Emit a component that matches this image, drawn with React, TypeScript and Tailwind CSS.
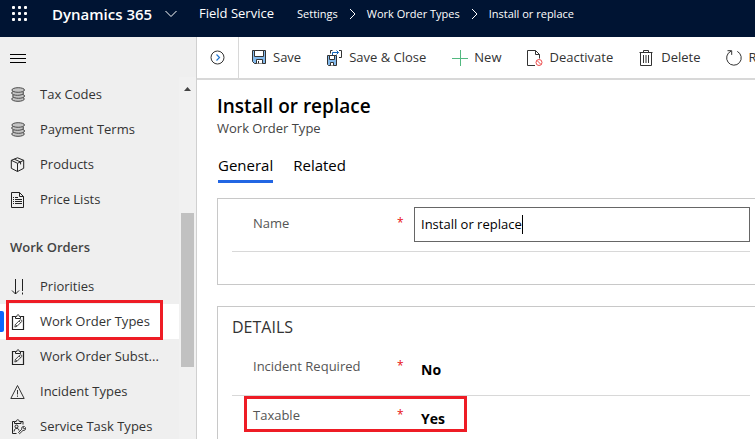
import { useState, type ReactNode } from "react";

const navItems = [
  { label: "Tax Codes", icon: <CoinsIcon /> },
  { label: "Payment Terms", icon: <CoinsIcon /> },
  { label: "Products", icon: <BoxIcon /> },
  { label: "Price Lists", icon: <ListIcon /> },
];

const workOrderItems = [
  { label: "Priorities", icon: <PriorityIcon /> },
  { label: "Work Order Types", icon: <ClipboardIcon />, active: true },
  { label: "Work Order Subst...", icon: <ClipboardIcon /> },
  { label: "Incident Types", icon: <WarningIcon /> },
  { label: "Service Task Types", icon: <TaskIcon /> },
];

function CoinsIcon() {
  return (
    <svg width="16" height="16" viewBox="0 0 16 16" fill="#c4c4c4" stroke="#4a4a4a">
      <ellipse cx="8" cy="12" rx="6.3" ry="2.3" />
      <ellipse cx="8.6" cy="9" rx="6" ry="2.3" />
      <ellipse cx="7.6" cy="6" rx="6" ry="2.3" />
      <ellipse cx="8.2" cy="3" rx="6.3" ry="2.3" />
    </svg>
  );
}

function BoxIcon() {
  return (
    <svg width="16" height="16" viewBox="0 0 16 16" fill="none" stroke="#222" strokeLinejoin="round">
      <path d="M7.5.8 13.700 3.300v8L7.500 14.500 1.300 11.300v-8zM1.300 3.300l6.200 3 6.200-3M7.500 6.300v8.200M4.300 2.200l6.300 2.800v2.400" />
    </svg>
  );
}

function ListIcon() {
  return (
    <svg width="16" height="16" viewBox="0 0 16 16" fill="none" stroke="#222">
      <path d="M1.500.5h8l4 4v11h-12zM9.500.5v4h4" />
      <path d="M3 5.500h1m1 0h3M3 7.500h1m1 0h7M3 9.500h1m1 0h7M3 11.500h1m1 0h7" />
    </svg>
  );
}

function PriorityIcon() {
  return (
    <svg width="16" height="16" viewBox="0 0 16 16" fill="none" stroke="#222">
      <path d="M5.500 0v15M2 11.500 5.500 15 9 11.500M12.500 0v12M12.500 13.500v2" />
    </svg>
  );
}

function ClipboardIcon() {
  return (
    <svg width="16" height="16" viewBox="0 0 16 16" fill="none" stroke="#222">
      <path d="M5.500 2.500h-3v13h11v-13h-3" strokeWidth="1.200" />
      <path d="M5.500 4.500v-2h1.300C6.800.2 9.300.2 9.300 2.500h1.200v2z" />
      <path d="m4.800 13 .6-2.500 4.500-4.500c1-.8 2.600.6 1.700 1.700l-4.500 4.500zM9 7l1.700 1.700M5.400 10.500l1.700 1.700" strokeWidth=".8" />
    </svg>
  );
}

function WarningIcon() {
  return (
    <svg width="16" height="16" viewBox="0 0 16 16" fill="none" stroke="#333">
      <path d="M7.500 1.500.8 14.500h13.400zM7.500 6v4.500M7.500 11.500v1.300" />
    </svg>
  );
}

function TaskIcon() {
  return (
    <svg width="16" height="16" viewBox="0 0 16 16" fill="none" stroke="#222">
      <path d="M4.500 2.500h-2v12h4M11 2.500h2v3M4.500 4.500v-2h1.700C6.200.2 9.300.2 9.300 2.500H11v2z" />
      <circle cx="6.500" cy="7.500" r="1.500" />
      <path d="M4 12.500c.2-4 4.800-4 5-1" />
      <path d="m8.500 13.500 3.300-3.300c-.5-2 .8-3.200 2.600-2.700l-1.300 1.300 1.100 1.100 1.300-1.300c.6 2-.8 3.200-2.500 2.800l-3.300 3.200z" strokeWidth=".9" />
    </svg>
  );
}

function SaveIcon() {
  return (
    <svg width="16" height="16" viewBox="0 0 16 16" fill="none" stroke="#333">
      <path d="M1.500.5h13v13h-11l-2-2z" fill="#83b9eb" />
      <path d="M3.500.5h9v6h-9zM5.500 13.500v-4h6v4" fill="#fff" />
      <path d="M7.500 11v2.500" />
    </svg>
  );
}

function SaveCloseIcon() {
  return (
    <svg width="16" height="16" viewBox="0 0 16 16" fill="none" stroke="#333">
      <path d="M.5 5.500h9v10h-8l-1-1z" fill="#83b9eb" />
      <path d="M2.500 5.500h5v4h-5zM3.500 15.500v-3h3v3" fill="#fff" />
      <path d="M3.500 3.500v-3h2M12 .5h2.500v7H12" />
      <path d="M5.500 5V2.500h6M9.500.5l2 2-2 2" stroke="#1565b8" />
    </svg>
  );
}

function NewIcon() {
  return (
    <svg width="16" height="16" viewBox="0 0 16 16" stroke="#52b980">
      <path d="M0 8.500h16M8.500 0v16" />
    </svg>
  );
}

function DeactivateIcon() {
  return (
    <svg width="16" height="16" viewBox="0 0 16 16" fill="none" stroke="#333">
      <path d="M8 15.500H.5V.5h8l4 4v4M8.500.5v4h4" />
      <circle cx="12" cy="12.500" r="3" stroke="#ed4b4b" />
      <path d="m10 10.500 4 4" stroke="#ed4b4b" />
    </svg>
  );
}

function DeleteIcon() {
  return (
    <svg width="16" height="16" viewBox="0 0 16 16" fill="none" stroke="#333">
      <path d="M.5 2.500h13M4.500 2.500v-2h5v2M1.500 2.500v13h11v-13M4.500 5v8M7 5v8M9.500 5v8" />
    </svg>
  );
}

function RefreshIcon() {
  return (
    <svg width="16" height="16" viewBox="0 0 16 16" fill="none" stroke="#333">
      <path d="M5 1.200a7.300 7.300 0 1 0 6.300.2M1.500.700h4.200v4.200" />
    </svg>
  );
}

function Chevron() {
  return (
    <svg width="7" height="12" viewBox="0 0 7 12" fill="none" stroke="#fff">
      <path d="m1 1 5 5-5 5" />
    </svg>
  );
}

const commands = [
  { label: "Save", icon: <SaveIcon /> },
  { label: "Save & Close", icon: <SaveCloseIcon /> },
  { label: "New", icon: <NewIcon /> },
  { label: "Deactivate", icon: <DeactivateIcon /> },
  { label: "Delete", icon: <DeleteIcon /> },
  { label: "Refresh", icon: <RefreshIcon /> },
];

type NavItemProps = { label: string; icon: ReactNode; active?: boolean };

function NavItem({ label, icon, active }: NavItemProps) {
  return (
    <li className={active ? "relative bg-white" : ""}>
      <a href="#" className="flex h-[35px] items-center gap-3.5 pl-2.5 text-[13px] text-[#333] whitespace-nowrap">
        {icon}
        {label}
      </a>
      {active && (
        <>
          <span className="absolute left-0 top-[7px] h-[21px] w-1 rounded-r-xs bg-[#0b66ff]" />
          <span className="absolute -top-1 left-1.5 h-10 w-[157px] border-3 border-[#ee1c25]" />
        </>
      )}
    </li>
  );
}

function ToggleField({ id, label, value, marked }: { id: string; label: string; value: boolean; marked?: boolean }) {
  const [on, setOn] = useState(value);

  return (
    <div className="relative flex h-12 items-start pl-[21px] pt-[9px] text-[13px]">
      <label htmlFor={id} className="w-36 leading-5 text-[#555]">{label}</label>
      <span className="w-6 text-[12px] leading-5 text-[#e81010]">*</span>
      <button id={id} onClick={() => setOn(!on)} className="pt-1 text-[14px] leading-5 font-bold text-black">
        {on ? "Yes" : "No"}
      </button>
      {marked && <span className="pointer-events-none absolute left-3 top-0 h-9 w-[223px] border-3 border-[#ee1c25]" />}
    </div>
  );
}

export default function App() {
  const [name, setName] = useState("Install or replace");

  return (
    <div className="flex h-screen flex-col overflow-hidden bg-white font-['Open_Sans','Noto_Sans',sans-serif] text-[13px]">
      {/* Top bar */}
      <header className="flex h-[37px] shrink-0 items-center bg-[#001433] pb-[9px] pl-3 whitespace-nowrap text-white">
        <button aria-label="App launcher">
          <svg width="16" height="16" viewBox="0 0 16 16" fill="#fff">
            {[0, 6, 12].map((y) => [0, 6, 12].map((x) => <rect key={`${x}-${y}`} x={x} y={y} width="3" height="3" rx="1" />))}
          </svg>
        </button>
        <a href="#" className="ml-6 w-[113px] text-[15px] font-semibold">Dynamics 365</a>
        <svg width="12" height="8" viewBox="0 0 12 8" fill="none" stroke="#fff" className="shrink-0">
          <path d="m.5 1 5.500 5.500L11.500 1" />
        </svg>
        <a href="#" className="ml-[22px] w-[98px] text-[13px]">Field Service</a>
        <nav className="flex items-center gap-[11px] text-[11px]">
          <a href="#">Settings</a>
          <Chevron />
          <a href="#">Work Order Types</a>
          <Chevron />
          <a href="#">Install or replace</a>
        </nav>
      </header>

      <div className="flex min-h-0 flex-1">
        {/* Site map */}
        <aside className="flex w-[197px] shrink-0 flex-col border-r border-[#d0d0d0] bg-[#efefef]">
          <button aria-label="Menu" className="h-10 shrink-0 pt-1 pl-2.5">
            <svg width="16" height="10" viewBox="0 0 16 10" stroke="#000">
              <path d="M0 .5h16M0 4.500h16M0 8.500h16" />
            </svg>
          </button>
          <div className="flex min-h-0 flex-1">
            <nav className="min-w-0 flex-1">
              <ul>
                {navItems.map((item) => (
                  <NavItem key={item.label} {...item} />
                ))}
              </ul>
              <h2 className="flex h-[52px] items-center pl-2.5 pt-2.5 text-[13px] font-semibold text-[#444]">Work Orders</h2>
              <ul>
                {workOrderItems.map((item) => (
                  <NavItem key={item.label} {...item} />
                ))}
              </ul>
            </nav>
            <div className="flex w-[17px] flex-col items-center bg-[#f1f1f1] pt-2.5">
              <svg width="7" height="4" viewBox="0 0 7 4" fill="#444">
                <path d="M0 4 3.500 0 7 4z" />
              </svg>
              <div className="mt-[122px] h-[154px] w-[13px] bg-[#c1c1c1]" />
            </div>
          </div>
        </aside>

        <main className="min-w-0 flex-1 overflow-hidden">
          {/* Command bar */}
          <div className="flex h-[43px] items-stretch border-b-2 border-[#d8d8d8] whitespace-nowrap text-[#333]">
            <button aria-label="Expand" className="flex w-[42px] shrink-0 items-center justify-center border-r border-[#d8d8d8]">
              <svg width="15" height="15" viewBox="0 0 15 15" fill="none" stroke="#333">
                <circle cx="7.500" cy="7.500" r="6.500" />
                <path d="m6.500 4.500 3 3-3 3" stroke="#1f74d0" strokeWidth="1.200" />
              </svg>
            </button>
            <div className="flex items-center gap-[26px] pl-3">
              {commands.map((command) => (
                <button key={command.label} className="flex items-center gap-1.5">
                  {command.icon}
                  {command.label}
                </button>
              ))}
            </div>
          </div>

          {/* Record header */}
          <div className="pl-5 pt-3.5">
            <h1 className="text-[19px] leading-6 font-semibold text-black">Install or replace</h1>
            <p className="text-[13px] leading-5 font-medium text-[#444]">Work Order Type</p>
            <div role="tablist" className="mt-[15px] flex gap-5 pl-px text-[15px] leading-6 text-black">
              <button role="tab" aria-selected="true" className="border-b-3 border-[#2266e3] pb-[3px] font-medium">General</button>
              <button role="tab" aria-selected="false" className="border-b-3 border-transparent pb-[3px]">Related</button>
            </div>
          </div>

          <section className="mt-[15px] ml-5 -mr-px h-[87px] border border-[#c8c8c8] pl-3.5 pr-[5px]">
            <div className="flex h-[53px] items-start border-b border-[#d8d8d8] pl-[21px] pt-2">
              <label htmlFor="name" className="w-36 pt-1.5 leading-5 text-[#555]">Name</label>
              <span className="w-[17px] pt-1.5 text-[12px] leading-5 text-[#e81010]">*</span>
              <div className="flex h-[35px] flex-1 items-center border border-[#666] pl-1.5">
                <input
                  id="name"
                  value={name}
                  onChange={(e) => setName(e.target.value)}
                  className="field-sizing-content text-black outline-none"
                />
                <span className="h-[19px] w-px bg-black" />
              </div>
            </div>
          </section>

          <section className="mt-[21px] ml-5 -mr-px border border-[#c8c8c8] pl-3.5 pr-[5px]">
            <h2 className="pt-2 text-[16px] leading-6 text-[#333]">DETAILS</h2>
            <div className="mt-2 border-b border-[#d8d8d8]">
              <ToggleField id="incident" label="Incident Required" value={false} />
            </div>
            <ToggleField id="taxable" label="Taxable" value={true} marked />
          </section>
        </main>
      </div>
    </div>
  );
}
